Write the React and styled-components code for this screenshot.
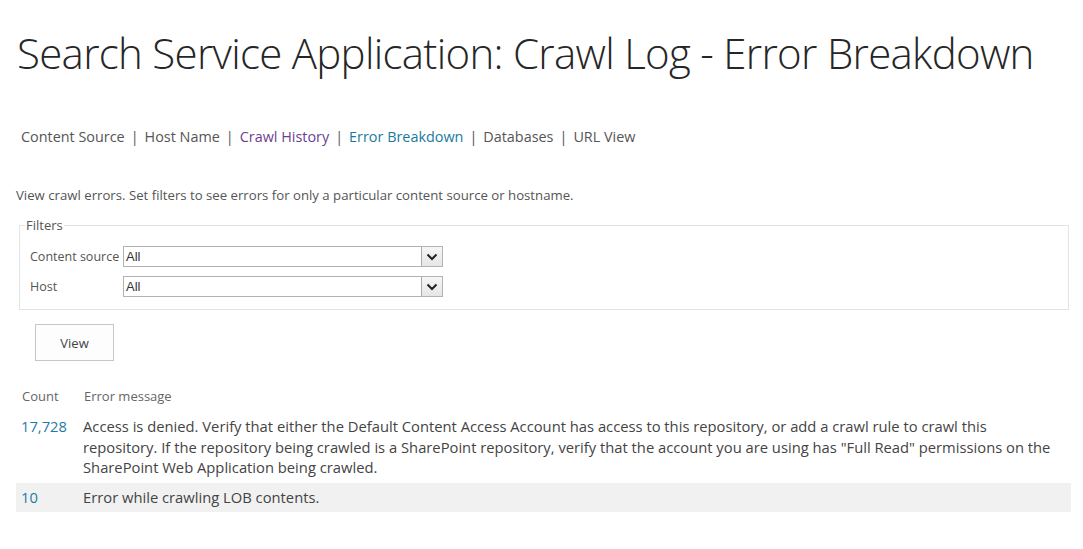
import React from 'react';
import styled, { createGlobalStyle } from 'styled-components';

const GlobalStyle = createGlobalStyle`
    body {
        margin: 0;
        background: #fff;
        font-family: "Open Sans", "Noto Sans", sans-serif;
        color: #444;
    }
`;

const Page = styled.div`
    padding: 0 13px 0 16px;
`;

const Title = styled.h1`
    margin: 0;
    padding: 23px 0 0 1px;
    font-weight: 300;
    font-size: 42px;
    line-height: 60px;
    color: #262626;
    letter-spacing: -0.7px;
    white-space: nowrap;
`;

const Nav = styled.div`
    display: flex;
    align-items: center;
    margin: 43px 0 0 5px;
    font-size: 14.4px;
    line-height: 22px;
    color: #666;
`;

const NavLink = styled.a`
    color: ${({ tone }) => tone === 'visited' ? '#6b3f8f' : tone === 'active' ? '#1b7a9c' : '#555'};
    text-decoration: none;
`;

const Sep = styled.span`
    margin: 0 6px;
    color: #555;
`;

const Intro = styled.p`
    margin: 38px 0 0 0;
    font-size: 13.2px;
    line-height: 18px;
    color: #555;
`;

const Fieldset = styled.fieldset`
    margin: 12px 0 0 3px;
    padding: 12px 0 12px 10px;
    border: 1px solid #e3e3e3;
    width: 1050px;
    box-sizing: border-box;
`;

const Legend = styled.legend`
    padding: 0 1px;
    margin-left: -5px;
    font-size: 13px;
    color: #555;
`;

const FilterGrid = styled.div`
    display: grid;
    grid-template-columns: 93px 320px;
    row-gap: 9px;
    align-items: center;
`;

const FilterLabel = styled.span`
    font-size: 12.5px;
    color: #555;
    white-space: nowrap;
`;

const Select = styled.div`
    display: flex;
    align-items: center;
    height: 21px;
    border: 1px solid #b3b3b3;
    box-sizing: border-box;
    background: #fff;
    font-family: "Liberation Sans", Arial, sans-serif;
    font-size: 13px;
    color: #333;
`;

const SelectValue = styled.span`
    flex: 1;
    padding-left: 2px;
`;

const SelectButton = styled.span`
    display: flex;
    align-items: center;
    justify-content: center;
    width: 20px;
    height: 19px;
    border-left: 1px solid #ababab;
    background: linear-gradient(#f6f6f6, #e6e6e6);
`;

const Button = styled.button`
    display: block;
    margin: 14px 0 0 19px;
    width: 79px;
    height: 37px;
    border: 1px solid #c6c6c6;
    background: #fdfdfd;
    font-family: inherit;
    font-size: 13px;
    color: #444;
`;

const Table = styled.div`
    margin-top: 26px;
    width: 1055px;
`;

const Row = styled.div`
    display: grid;
    grid-template-columns: 67px 1fr;
    background: ${({ shade }) => shade ? '#f1f1f1' : 'transparent'};
    padding: ${({ head }) => head ? '0 0 7px' : '4px 0 5px'};
`;

const HeadCell = styled.div`
    font-size: 13px;
    line-height: 18px;
    color: #666;
    padding-left: ${({ first }) => first ? '6px' : '1px'};
`;

const Count = styled.a`
    font-size: 14.75px;
    line-height: 20.5px;
    color: #1f7aa8;
    padding-left: 5px;
    text-decoration: none;
`;

const Message = styled.div`
    font-size: 14.75px;
    line-height: 20.5px;
    color: #444;
    padding-right: 16px;
`;

const Chevron = () => (
    <svg width="12" height="8" viewBox="0 0 12 8">
        <path d="M1.5 1.5 L6 6 L10.5 1.5" fill="none" stroke="#222" strokeWidth="2" />
    </svg>
);

const links = [
    { label: 'Content Source' },
    { label: 'Host Name' },
    { label: 'Crawl History', tone: 'visited' },
    { label: 'Error Breakdown', tone: 'active' },
    { label: 'Databases' },
    { label: 'URL View' },
];

const errors = [
    {
        count: '17,728',
        text: 'Access is denied. Verify that either the Default Content Access Account has access to this repository, or add a crawl rule to crawl this repository. If the repository being crawled is a SharePoint repository, verify that the account you are using has "Full Read" permissions on the SharePoint Web Application being crawled.',
    },
    { count: '10', text: 'Error while crawling LOB contents.' },
];

export default function App() {
    return (
        <Page>
            <GlobalStyle />
            <Title>Search Service Application: Crawl Log - Error Breakdown</Title>

            <Nav>
                {links.map((l, i) => (
                    <React.Fragment key={l.label}>
                        {i > 0 && <Sep>|</Sep>}
                        <NavLink href="#" tone={l.tone}>{l.label}</NavLink>
                    </React.Fragment>
                ))}
            </Nav>

            <Intro>View crawl errors. Set filters to see errors for only a particular content source or hostname.</Intro>

            <Fieldset>
                <Legend>Filters</Legend>
                <FilterGrid>
                    <FilterLabel>Content source</FilterLabel>
                    <Select>
                        <SelectValue>All</SelectValue>
                        <SelectButton><Chevron /></SelectButton>
                    </Select>
                    <FilterLabel>Host</FilterLabel>
                    <Select>
                        <SelectValue>All</SelectValue>
                        <SelectButton><Chevron /></SelectButton>
                    </Select>
                </FilterGrid>
            </Fieldset>

            <Button>View</Button>

            <Table>
                <Row head>
                    <HeadCell first>Count</HeadCell>
                    <HeadCell>Error message</HeadCell>
                </Row>
                {errors.map((e, i) => (
                    <Row key={e.count} shade={i % 2 === 1}>
                        <Count href="#">{e.count}</Count>
                        <Message>{e.text}</Message>
                    </Row>
                ))}
            </Table>
        </Page>
    );
}
